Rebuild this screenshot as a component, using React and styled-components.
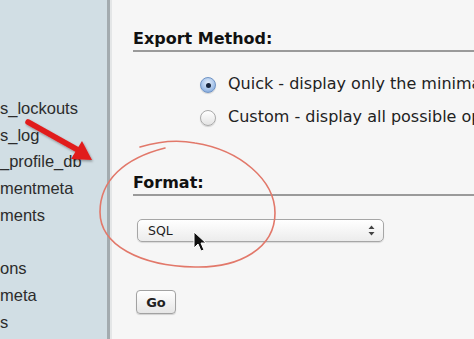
import React from 'react';
import styled, { createGlobalStyle } from 'styled-components';

const GlobalStyle = createGlobalStyle`
  html, body { margin: 0; padding: 0; background: #f6f6f6; }
  * { box-sizing: border-box; }
`;

const Page = styled.div`
  position: relative;
  width: 474px;
  height: 339px;
  display: flex;
  flex-direction: row;
  overflow: hidden;
  font-family: "Liberation Sans", Arial, sans-serif;
`;

const Sidebar = styled.div`
  width: 110px;
  flex-shrink: 0;
  background-color: #d1dee4;
  border-right: 3px solid #a3abaf;
  padding-top: 95px;
  display: flex;
  flex-direction: column;
  overflow: hidden;
`;

const TableItem = styled.div`
  height: 26.7px;
  line-height: 26.7px;
  font-size: 16.5px;
  color: #2c2c2c;
  white-space: nowrap;
`;

const Main = styled.div`
  flex: 1;
  background-color: #f6f6f6;
  border-left: 2px solid #e4e6e7;
  padding-left: 21px;
  display: flex;
  flex-direction: column;
  white-space: nowrap;
  overflow: hidden;
  font-family: "DejaVu Sans", Verdana, sans-serif;
`;

const SectionTitle = styled.h2`
  margin: ${p => p.$top}px 0 0 0;
  font-size: 16px;
  font-weight: bold;
  line-height: 20px;
  color: #111;
  padding-bottom: 1px;
  border-bottom: 2px solid #9a9a9a;
`;

const RadioList = styled.div`
  margin-top: 15px;
  padding-left: 67px;
  display: flex;
  flex-direction: column;
`;

const RadioRow = styled.label`
  height: 33px;
  display: flex;
  flex-direction: row;
  align-items: center;
  gap: 12px;
  font-size: 16px;
  color: #222;
`;

const Radio = styled.span`
  width: 16px;
  height: 16px;
  margin-top: 3px;
  border-radius: 50%;
  display: flex;
  align-items: center;
  justify-content: center;
  flex-shrink: 0;
  border: 1px solid ${p => (p.$checked ? '#6f93c4' : '#a9a9a9')};
  background: ${p =>
    p.$checked
      ? 'radial-gradient(circle at 50% 35%, #e4eefb 0%, #a9c5ea 55%, #6f9bd6 100%)'
      : 'linear-gradient(#ffffff, #e3e3e3)'};
  box-shadow: 0 1px 1px rgba(0, 0, 0, 0.15);
`;

const RadioDot = styled.span`
  width: 5px;
  height: 5px;
  border-radius: 50%;
  background: #17253d;
`;

const SelectBox = styled.div`
  margin: 23px 0 0 4px;
  width: 247px;
  height: 23px;
  border: 1px solid #a6a6a6;
  border-radius: 5px;
  background: linear-gradient(#ffffff, #ececec);
  box-shadow: 0 1px 1px rgba(0, 0, 0, 0.12);
  display: flex;
  flex-direction: row;
  align-items: center;
  justify-content: space-between;
  padding: 0 8px 0 10px;
  font-size: 12.5px;
  color: #1d1d1d;
`;

const Chevrons = styled.svg`
  width: 7px;
  height: 11px;
`;

const GoButton = styled.button`
  margin: 48px 0 0 3px;
  width: 40px;
  height: 24px;
  padding: 0;
  border: 1px solid #a2a2a2;
  border-radius: 4px;
  background: linear-gradient(#ffffff, #e6e6e6);
  box-shadow: 0 1px 1px rgba(0, 0, 0, 0.15);
  font-family: "DejaVu Sans", Verdana, sans-serif;
  font-weight: bold;
  font-size: 13px;
  color: #222;
  align-self: flex-start;
`;

const Overlay = styled.svg`
  position: absolute;
  left: 0;
  top: 0;
  width: 474px;
  height: 339px;
  pointer-events: none;
`;

const tables = [
  's_lockouts',
  's_log',
  '_profile_db',
  'mentmeta',
  'ments',
  '',
  'ons',
  'meta',
  's',
];

export default function App() {
  return (
    <>
      <GlobalStyle />
      <Page>
        <Sidebar>
          {tables.map((t, i) => (
            <TableItem key={i}>{t}</TableItem>
          ))}
        </Sidebar>
        <Main>
          <SectionTitle $top={29}>Export Method:</SectionTitle>
          <RadioList>
            <RadioRow>
              <Radio $checked>
                <RadioDot />
              </Radio>
              Quick - display only the minimal options
            </RadioRow>
            <RadioRow>
              <Radio />
              Custom - display all possible options
            </RadioRow>
          </RadioList>
          <SectionTitle $top={40}>Format:</SectionTitle>
          <SelectBox>
            <span>SQL</span>
            <Chevrons viewBox="0 0 7 11">
              <path d="M3.5 0.5 L6.5 4 L0.5 4 Z M3.5 10.5 L6.5 7 L0.5 7 Z" fill="#444" />
            </Chevrons>
          </SelectBox>
          <GoButton>Go</GoButton>
        </Main>
        <Overlay viewBox="0 0 474 339">
          <defs>
            <filter id="shadow" x="-20%" y="-20%" width="140%" height="140%">
              <feDropShadow dx="1" dy="1.5" stdDeviation="1.2" floodColor="#000" floodOpacity="0.35" />
            </filter>
          </defs>
          <path
            d="M140 147 C160 141 180 140 195 143 C240 150 275 180 275 213 C275 248 240 268 195 267 C140 266 100 245 100 212 C100 180 125 158 165 148"
            fill="none"
            stroke="#e2786a"
            strokeWidth="1.6"
            strokeLinecap="round"
          />
          <g filter="url(#shadow)">
            <line x1="28" y1="122" x2="78" y2="150" stroke="#e11d1d" strokeWidth="5.5" strokeLinecap="round" />
            <path d="M92 160 L71 159 L82 141 Z" fill="#e11d1d" />
          </g>
          <path
            d="M194 232 L194 248 L198 244 L201 251 L204 250 L201 243 L206 243 Z"
            fill="#111"
            stroke="#fff"
            strokeWidth="1"
            strokeLinejoin="round"
          />
        </Overlay>
      </Page>
    </>
  );
}
